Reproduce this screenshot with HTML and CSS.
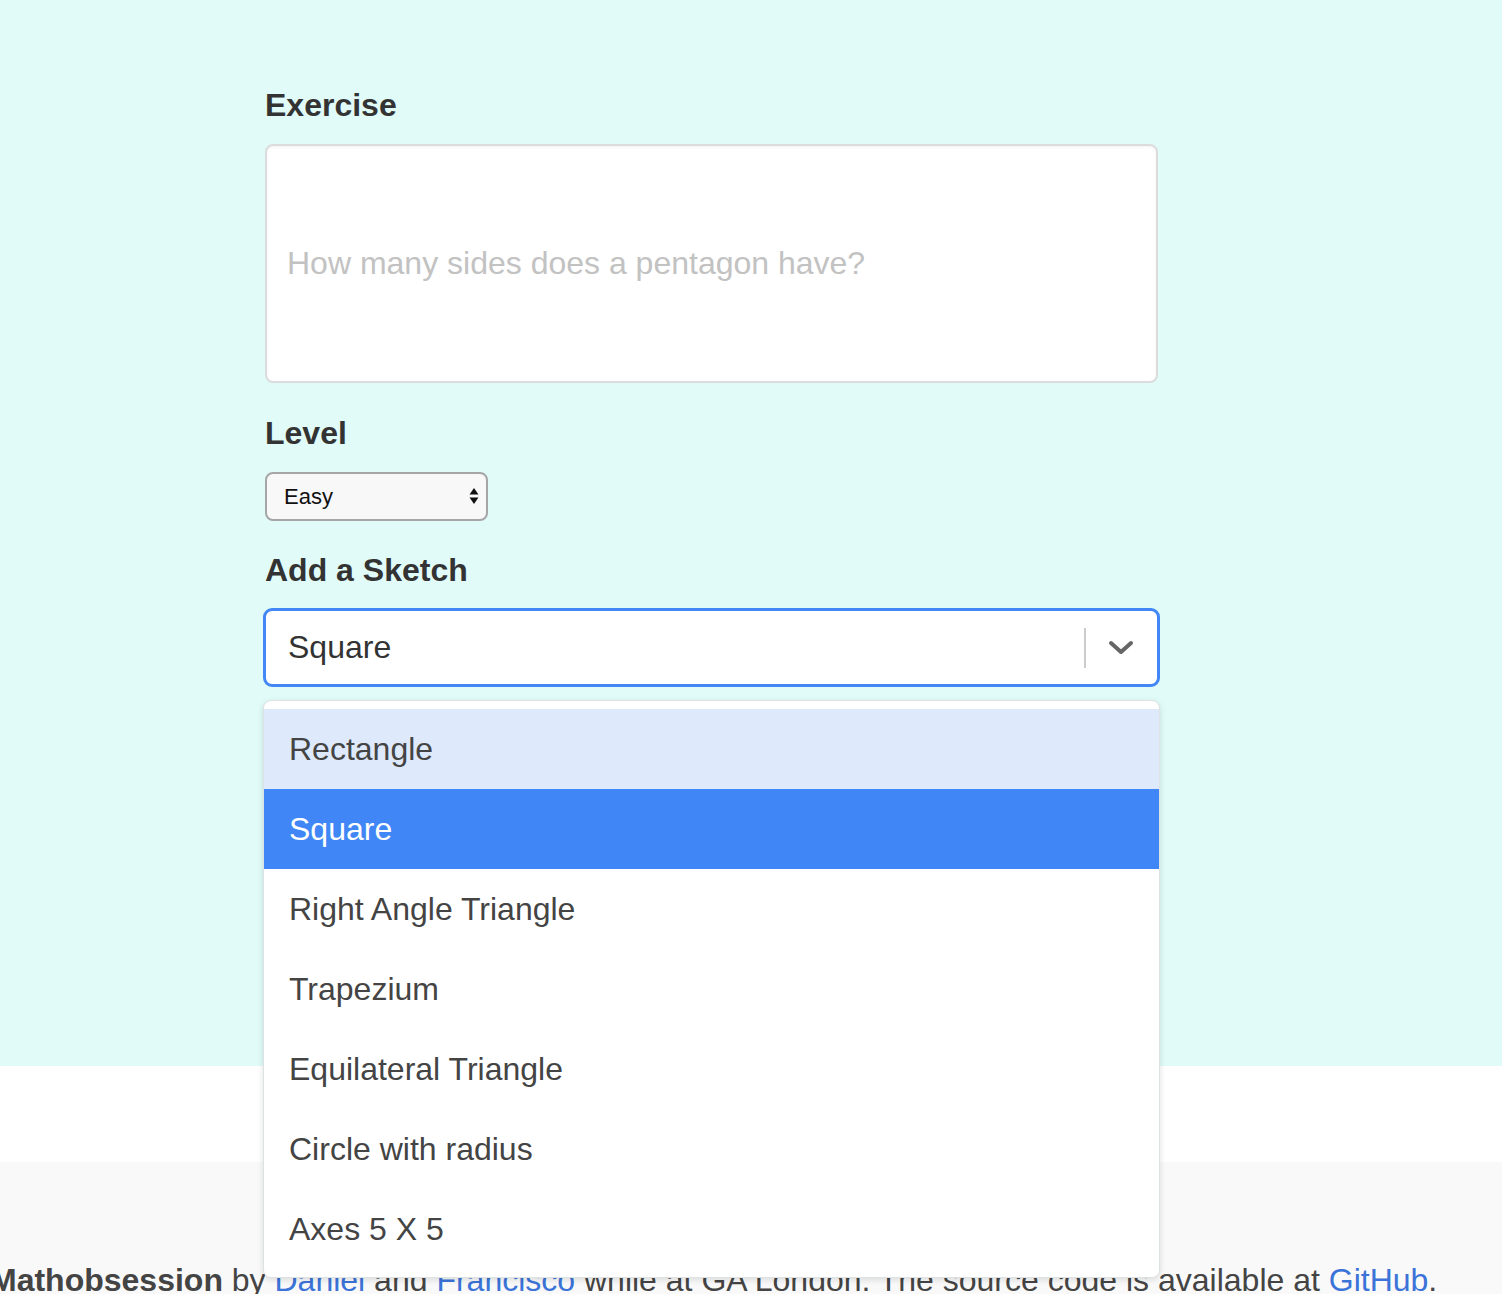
FILE: index.html
```html
<!DOCTYPE html>
<html lang="en">
<head>
    <meta charset="UTF-8">
    <meta name="viewport" content="width=device-width, initial-scale=1.0">
    <title>Mathobsession - New Exercise</title>
    <link rel="stylesheet" href="styles.css">
</head>
<body>
    <div class="main">
        <form class="exercise-form">
            <label class="field-label" for="question">Exercise</label>
            <textarea id="question" class="question" placeholder="How many sides does a pentagon have?"></textarea>

            <label class="field-label" for="level">Level</label>
            <div class="level-wrap">
                <select id="level" class="level">
                    <option>Easy</option>
                    <option>Medium</option>
                    <option>Hard</option>
                </select>
                <svg class="level-arrows" width="10" height="18" viewBox="0 0 10 18">
                    <path d="M5 1 L9.5 7.5 H0.5 Z" fill="#111"/>
                    <path d="M5 17 L9.5 10.5 H0.5 Z" fill="#111"/>
                </svg>
            </div>

            <label class="field-label sketch-label">Add a Sketch</label>
            <div class="sketch-select">
                <div class="control">
                    <div class="value">Square</div>
                    <span class="separator"></span>
                    <div class="indicator">
                        <svg width="26" height="16" viewBox="0 0 26 16">
                            <path d="M3 3 L13 12 L23 3" fill="none" stroke="#666" stroke-width="4" stroke-linecap="round" stroke-linejoin="round"/>
                        </svg>
                    </div>
                </div>
                <ul class="menu">
                    <li class="option focused">Rectangle</li>
                    <li class="option selected">Square</li>
                    <li class="option">Right Angle Triangle</li>
                    <li class="option">Trapezium</li>
                    <li class="option">Equilateral Triangle</li>
                    <li class="option">Circle with radius</li>
                    <li class="option">Axes 5 X 5</li>
                </ul>
            </div>
        </form>
    </div>

    <div class="spacer"></div>

    <footer class="footer">
        <p><strong>Mathobsession</strong> by <a href="#">Daniel</a> and <a href="#">Francisco</a> while at GA London. The source code is available at <a href="#">GitHub</a>.</p>
    </footer>
</body>
</html>
```

FILE: styles.css
```css
body {
    margin: 0;
    font-family: 'Liberation Sans', Arial, sans-serif;
    color: #333;
    background: #fff;
    overflow: hidden;
}

.main {
    background: #e0fbf8;
    height: 1066px;
    box-sizing: border-box;
    padding-top: 87px;
}

.exercise-form {
    width: 893px;
    margin-left: 265px;
    display: flex;
    flex-direction: column;
    align-items: flex-start;
}

.field-label {
    font-size: 32px;
    font-weight: bold;
    color: #333;
    margin-bottom: 20px;
}

.sketch-label {
    margin-bottom: 19px;
}

.question {
    width: 100%;
    height: 239px;
    box-sizing: border-box;
    padding: 99px 20px 20px;
    border: 2px solid #dcdcdc;
    border-radius: 8px;
    box-shadow: inset 0 1px 3px rgba(0, 0, 0, 0.06);
    background: #fff;
    font-family: 'Liberation Sans', Arial, sans-serif;
    font-size: 32px;
    color: #333;
    resize: none;
    outline: none;
    margin-bottom: 32px;
}

.question::placeholder {
    color: #c2c2c2;
}

.level-wrap {
    position: relative;
    margin-bottom: 31px;
}

.level {
    appearance: none;
    -webkit-appearance: none;
    width: 223px;
    height: 49px;
    box-sizing: border-box;
    padding: 0 17px;
    border: 2px solid #a6a6a6;
    border-radius: 8px;
    background: #f8f8f8;
    font-family: 'Liberation Sans', Arial, sans-serif;
    font-size: 22px;
    color: #111;
}

.level-arrows {
    position: absolute;
    right: 9px;
    top: 15px;
    pointer-events: none;
}

.sketch-select {
    position: relative;
    width: 897px;
    margin-left: -2px;
}

.control {
    display: flex;
    align-items: center;
    height: 79px;
    box-sizing: border-box;
    border: 3px solid #4287f5;
    border-radius: 9px;
    background: #fff;
}

.value {
    flex: 1;
    padding-left: 22px;
    font-size: 32px;
    color: #333;
}

.separator {
    width: 2px;
    height: 40px;
    background: #cccccc;
}

.indicator {
    display: flex;
    align-items: center;
    padding: 0 23px 0 22px;
}

.menu {
    position: absolute;
    top: 92px;
    left: 0;
    right: 0;
    margin: 0;
    padding: 8px 0;
    list-style: none;
    background: #fff;
    border: 1px solid #dde3e2;
    border-radius: 8px;
    box-shadow: 0 2px 6px rgba(0, 0, 0, 0.12);
    z-index: 10;
}

.option {
    height: 80px;
    display: flex;
    align-items: center;
    padding-left: 25px;
    font-size: 32px;
    color: #444;
}

.option.focused {
    background: #deeafc;
}

.option.selected {
    background: #4086f6;
    color: #fff;
}

.spacer {
    height: 96px;
    background: #fff;
}

.footer {
    background: #f9f9f9;
    padding-top: 100px;
    height: 200px;
}

.footer p {
    margin: 0 0 0 -10px;
    font-size: 32px;
    color: #444;
    white-space: nowrap;
}

.footer a {
    color: #3b73d8;
    text-decoration: none;
}
```
